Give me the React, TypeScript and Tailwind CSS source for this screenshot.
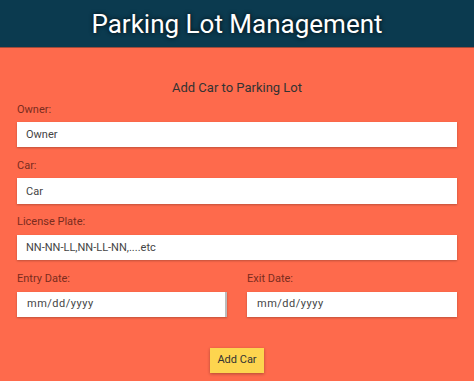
export default function App() {
  return (
    <div className="min-h-screen w-full bg-[#fe6a4c] font-['Roboto',sans-serif]">
      <div className="h-[48px] bg-[#0b3a4f] flex items-center justify-center border-b border-[#a04a3a]">
        <h1 className="text-white text-[26px] leading-none [text-shadow:0_0_4px_rgba(0,0,0,0.9)]">
          Parking Lot Management
        </h1>
      </div>

      <div className="px-[17px] pt-[33px]">
        <h2 className="text-center text-[13px] text-[#333] leading-none">Add Car to Parking Lot</h2>

        <div className="mt-[10px]">
          <label className="block text-[11px] text-[#7a2c1e] leading-none">Owner:</label>
          <input
            className="mt-[7px] w-full h-[25px] bg-white px-[9px] text-[11px] text-[#444] placeholder-[#444] shadow-[0_1px_2px_rgba(0,0,0,0.25)] outline-none"
            placeholder="Owner"
          />
        </div>

        <div className="mt-[13px]">
          <label className="block text-[11px] text-[#7a2c1e] leading-none">Car:</label>
          <input
            className="mt-[7px] w-full h-[26px] bg-white px-[9px] text-[11px] text-[#444] placeholder-[#444] shadow-[0_1px_2px_rgba(0,0,0,0.25)] outline-none"
            placeholder="Car"
          />
        </div>

        <div className="mt-[12px]">
          <label className="block text-[11px] text-[#7a2c1e] leading-none">License Plate:</label>
          <input
            className="mt-[8px] w-full h-[25px] bg-white px-[9px] text-[11px] text-[#444] placeholder-[#444] shadow-[0_1px_2px_rgba(0,0,0,0.25)] outline-none"
            placeholder="NN-NN-LL,NN-LL-NN,....etc"
          />
        </div>

        <div className="mt-[13px] grid grid-cols-2 gap-[20px]">
          <div>
            <label className="block text-[11px] text-[#7a2c1e] leading-none">Entry Date:</label>
            <div className="mt-[8px] h-[25px] bg-white px-[10px] flex items-center text-[11px] text-[#444] tracking-[0.5px] shadow-[0_1px_2px_rgba(0,0,0,0.25)] border-r-2 border-[#bbb]">
              mm/dd/yyyy
            </div>
          </div>
          <div>
            <label className="block text-[11px] text-[#7a2c1e] leading-none">Exit Date:</label>
            <div className="mt-[8px] h-[25px] bg-white px-[10px] flex items-center text-[11px] text-[#444] tracking-[0.5px] shadow-[0_1px_2px_rgba(0,0,0,0.25)]">
              mm/dd/yyyy
            </div>
          </div>
        </div>

        <div className="mt-[31px] flex justify-center">
          <button className="w-[54px] h-[25px] bg-[#fdd54f] text-[11px] text-[#333] shadow-[0_1px_3px_rgba(0,0,0,0.3)]">
            Add Car
          </button>
        </div>
      </div>
    </div>
  );
}
